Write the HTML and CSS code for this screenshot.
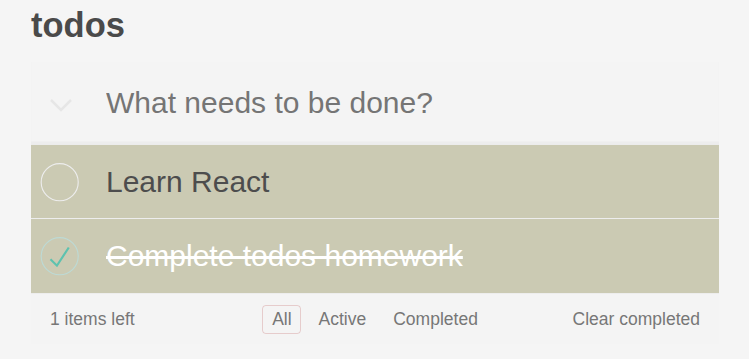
FILE: index.html
```html
<!DOCTYPE html>
<html lang="en">
<head>
<meta charset="utf-8">
<title>todos</title>
<link rel="stylesheet" href="styles.css">
</head>
<body>
<div class="app">
  <h1 class="title">todos</h1>
  <section class="todoapp">
    <header class="new-row">
      <span class="toggle-all">
        <svg width="24" height="14" viewBox="0 0 24 14"><polyline points="2,2 12,12 22,2" fill="none" stroke="#e6e6e6" stroke-width="2.5"/></svg>
      </span>
      <input class="new-todo" placeholder="What needs to be done?">
    </header>
    <ul class="todo-list">
      <li class="todo">
        <svg class="toggle" width="50" height="50" viewBox="-10 -18 100 135"><circle cx="50" cy="50" r="50" fill="none" stroke="#ededed" stroke-width="3"/></svg>
        <label class="todo-label">Learn React</label>
      </li>
      <li class="todo completed">
        <svg class="toggle" width="50" height="50" viewBox="-10 -18 100 135"><circle cx="50" cy="50" r="50" fill="none" stroke="#bddad5" stroke-width="3"/><path fill="#5dc2af" d="M72 25L42 71 27 56l-4 4 20 20 34-52z"/></svg>
        <label class="todo-label">Complete todos homework</label>
      </li>
    </ul>
    <footer class="footer">
      <span class="todo-count">1 items left</span>
      <ul class="filters">
        <li><a class="filter selected">All</a></li>
        <li><a class="filter">Active</a></li>
        <li><a class="filter">Completed</a></li>
      </ul>
      <span class="clear-completed">Clear completed</span>
    </footer>
  </section>
</div>
</body>
</html>
```
FILE: styles.css
```css
html, body {
  margin: 0;
  padding: 0;
}
body {
  background: #f5f5f5;
  font-family: "Liberation Sans", Arial, sans-serif;
  color: #4d4d4d;
}
.app {
  width: 688px;
  padding: 5px 0 0 31px;
}
.title {
  margin: 0 0 17px;
  font-size: 34.5px;
  line-height: 40px;
  font-weight: bold;
  color: #4a4a4a;
}
.todoapp {
  background: #f4f4f4;
}
.new-row {
  display: flex;
  align-items: center;
  height: 82px;
  box-shadow: inset 0 -2.5px 1.25px rgba(0, 0, 0, 0.03);
}
.toggle-all {
  display: flex;
  justify-content: center;
  width: 60px;
  padding-top: 4px;
}
.new-todo {
  flex: 1;
  margin-left: 15px;
  border: none;
  outline: none;
  background: transparent;
  font-family: "Liberation Sans", Arial, sans-serif;
  font-size: 30px;
  line-height: 42px;
  padding: 0;
  color: #4d4d4d;
}
.new-todo::placeholder {
  color: #757575;
}
.todo-list {
  list-style: none;
  margin: 0;
  padding: 0;
  border-top: 1px solid #ececec;
}
.todo {
  display: flex;
  align-items: center;
  height: 73px;
  background: #cbcab3;
  border-bottom: 1px solid #ededed;
}
.completed {
  height: 74px;
}
.toggle {
  flex: none;
  display: block;
}
.todo-label {
  padding-left: 25px;
  font-size: 30px;
  line-height: 36px;
  color: #4d4d4d;
}
.completed .todo-label {
  color: #ffffff;
  text-decoration: line-through;
}
.footer {
  display: grid;
  grid-template-columns: 1fr auto 1fr;
  align-items: center;
  height: 50px;
  padding: 0 19px;
  font-size: 17.5px;
  color: #777;
}
.filters {
  display: flex;
  list-style: none;
  margin: 0;
  padding: 0;
}
.filter {
  display: block;
  padding: 3.5px 8.75px;
  margin: 0 3.75px;
  border: 1.25px solid transparent;
  border-radius: 3.75px;
  line-height: 20px;
  color: #777;
}
.filter.selected {
  border-color: rgba(175, 47, 47, 0.2);
}
.clear-completed {
  justify-self: end;
}
```
